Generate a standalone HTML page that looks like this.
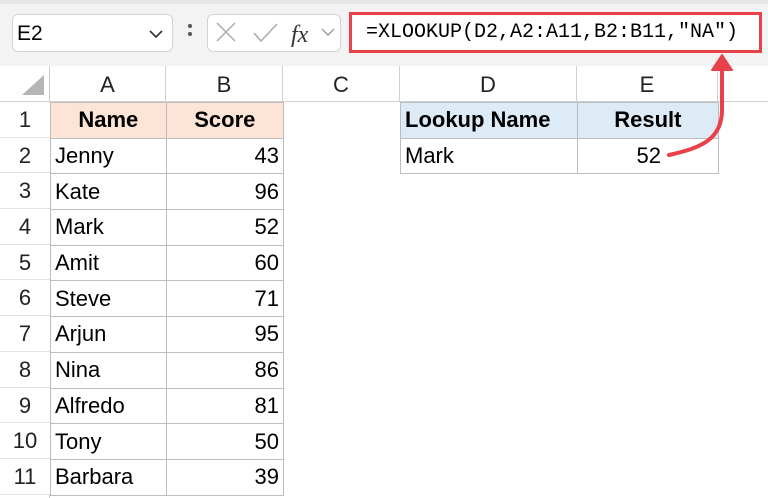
<!DOCTYPE html>
<html><head><meta charset="utf-8"><style>
*{margin:0;padding:0;box-sizing:border-box}
body{width:768px;height:498px;overflow:hidden;background:#fff;font-family:"Liberation Sans",sans-serif;position:relative;color:#000}
.a{position:absolute}
.top{left:0;top:0;width:768px;height:66px;background:#f3f3f3}
.box{background:#fff;border:1px solid #d4d4d4;border-radius:6px}
.hdr{top:66px;height:36px;background:#fff;border-right:1px solid #d0d0d0;font-size:22px;text-align:center;line-height:38px;color:#222}
.rn{left:0;width:50px;height:35.7px;font-size:22px;text-align:center;line-height:36px;border-bottom:1px solid #e2e2e2;background:#fff;color:#222}
table{border-collapse:collapse;position:absolute}
td{height:35.7px;border:1px solid #bdbdbd;font-size:22px;line-height:34px;padding:0 4px;white-space:nowrap}
.r{text-align:right}
.b{font-weight:bold;text-align:center}
</style></head><body>
<div class="a top"></div>
<div class="a" style="left:0;top:0;width:768px;height:4px;background:#e6e6e6"></div>
<div class="a box" style="left:12px;top:14px;width:161px;height:38px;font-size:21px;line-height:37px;padding-left:4px">E2</div>
<svg class="a" style="left:148px;top:28px" width="16" height="12"><path d="M2 3L8 9L14 3" stroke="#333" stroke-width="1.6" fill="none"/></svg>
<div class="a" style="left:188px;top:24px;width:4px;height:4px;background:#555;border-radius:2px"></div>
<div class="a" style="left:188px;top:32px;width:4px;height:4px;background:#555;border-radius:2px"></div>
<div class="a box" style="left:207px;top:14px;width:134px;height:38px"></div>
<svg class="a" style="left:207px;top:14px" width="134" height="38"><path d="M10 9L28 27M28 9L10 27" stroke="#aaa" stroke-width="1.5" fill="none"/><path d="M47 19L54 27L70 10" stroke="#aaa" stroke-width="1.5" fill="none"/><text x="84" y="28" font-family="Liberation Serif" font-style="italic" font-size="24" fill="#333">fx</text><path d="M115 15L121 21L127 15" stroke="#888" stroke-width="1.2" fill="none"/></svg>
<div class="a" style="left:349px;top:12px;width:413px;height:41px;background:#fff;border:3px solid #e8414a;font-family:'Liberation Mono',monospace;font-size:20px;line-height:35px;padding-left:14px">=XLOOKUP(D2,A2:A11,B2:B11,"NA")</div>
<div class="a" style="left:0;top:66px;width:768px;height:36px;background:#fff"></div>
<div class="a hdr" style="left:0;width:50px"></div>
<svg class="a" style="left:18px;top:73px" width="28" height="24"><path d="M26 2L26 22L4 22Z" fill="#b5b5b5"/></svg>
<div class="a hdr" style="left:50px;width:116px">A</div>
<div class="a hdr" style="left:166px;width:117px">B</div>
<div class="a hdr" style="left:283px;width:117px">C</div>
<div class="a hdr" style="left:400px;width:177px">D</div>
<div class="a hdr" style="left:577px;width:141px">E</div>
<div class="a" style="left:0;top:101px;width:768px;height:1px;background:#d0d0d0"></div>
<div class="a" style="left:49px;top:66px;width:1px;height:432px;background:#c8c8c8"></div>
<div class="a" style="left:0;top:102px">
<div class="rn">1</div><div class="rn">2</div><div class="rn">3</div><div class="rn">4</div><div class="rn">5</div><div class="rn">6</div><div class="rn">7</div><div class="rn">8</div><div class="rn">9</div><div class="rn">10</div><div class="rn">11</div>
</div>
<table style="left:50px;top:102px;width:234px">
<colgroup><col style="width:116px"><col style="width:118px"></colgroup>
<tr><td class="b" style="background:#fce4d6">Name</td><td class="b" style="background:#fce4d6">Score</td></tr>
<tr><td>Jenny</td><td class="r">43</td></tr>
<tr><td>Kate</td><td class="r">96</td></tr>
<tr><td>Mark</td><td class="r">52</td></tr>
<tr><td>Amit</td><td class="r">60</td></tr>
<tr><td>Steve</td><td class="r">71</td></tr>
<tr><td>Arjun</td><td class="r">95</td></tr>
<tr><td>Nina</td><td class="r">86</td></tr>
<tr><td>Alfredo</td><td class="r">81</td></tr>
<tr><td>Tony</td><td class="r">50</td></tr>
<tr><td>Barbara</td><td class="r">39</td></tr>
</table>
<table style="left:400px;top:102px;width:319px">
<colgroup><col style="width:177px"><col style="width:142px"></colgroup>
<tr><td class="b" style="background:#ddebf7;text-align:left">Lookup Name</td><td class="b" style="background:#ddebf7">Result</td></tr>
<tr><td>Mark</td><td class="r" style="padding-right:57px">52</td></tr>
</table>
<svg class="a" style="left:0;top:0" width="768" height="498"><path d="M669 155C700 148 722 140 722 110L722 66" stroke="#e8414a" stroke-width="4" fill="none" stroke-linecap="round"/><path d="M712 70L722 55L732 70Z" fill="#e8414a" stroke="#e8414a" stroke-width="2" stroke-linejoin="round"/></svg>
</body></html>
